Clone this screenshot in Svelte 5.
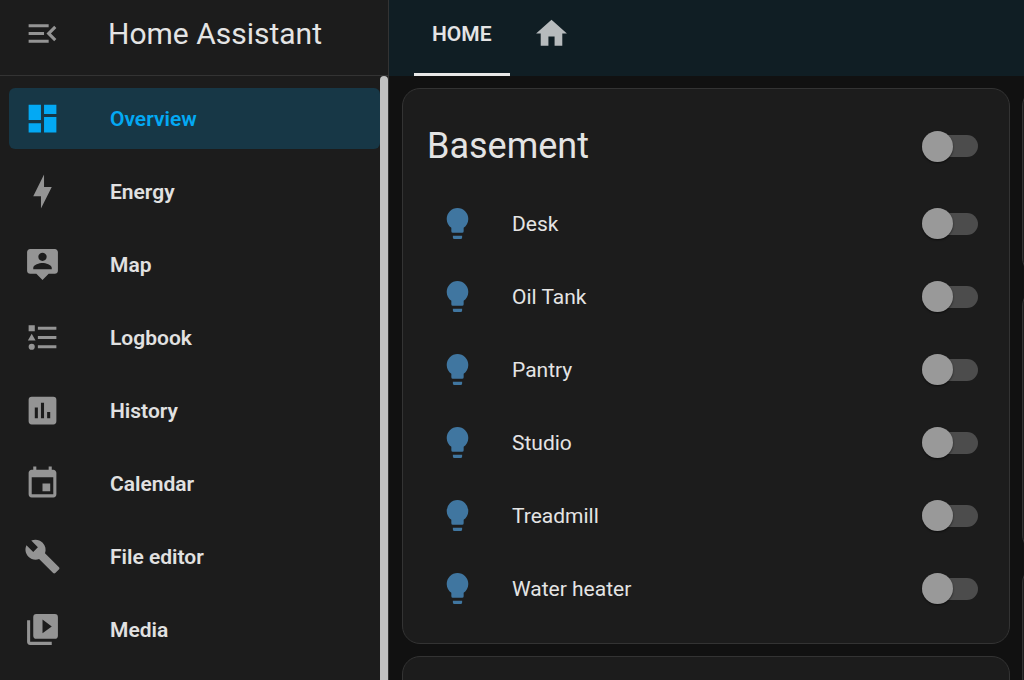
<script lang="ts">
  interface Item {
    label: string;
    icon: string;
  }

  const menuIcon =
    'M21,15.61L19.59,17L14.58,12L19.59,7L21,8.39L17.44,12L21,15.61M3,6H16V8H3V6M3,13V11H13V13H3M3,18V16H16V18H3Z';
  const homeIcon = 'M10,20V14H14V20H19V12H22L12,3L2,12H5V20H10Z';
  const bulbIcon =
    'M12,2A7,7 0 0,0 5,9C5,11.38 6.19,13.47 8,14.74V17A1,1 0 0,0 9,18H15A1,1 0 0,0 16,17V14.74C17.81,13.47 19,11.38 19,9A7,7 0 0,0 12,2M9,21A1,1 0 0,0 10,22H14A1,1 0 0,0 15,21V20H9V21Z';

  const items: Item[] = [
    { label: 'Overview', icon: 'M13,3V9H21V3M13,21H21V11H13M3,21H11V15H3M3,13H11V3H3V13Z' },
    { label: 'Energy', icon: 'M11 15H6L13 1V9H18L11 23V15Z' },
    {
      label: 'Map',
      icon: 'M20,2H4C2.89,2 2,2.89 2,4V16C2,17.11 2.9,18 4,18H8L12,22L16,18H20C21.11,18 22,17.11 22,16V4C22,2.89 21.1,2 20,2M12,4.3C13.5,4.3 14.7,5.5 14.7,7C14.7,8.5 13.5,9.7 12,9.7C10.5,9.7 9.3,8.5 9.3,7C9.3,5.5 10.5,4.3 12,4.3M18,15H6V14.1C6,12.1 10,11 12,11C14,11 18,12.1 18,14.1V15Z'
    },
    {
      label: 'Logbook',
      icon: 'M5,9.5L7.5,14H2.5L5,9.5M3,4H7V8H3V4M5,20A2,2 0 0,0 7,18A2,2 0 0,0 5,16A2,2 0 0,0 3,18A2,2 0 0,0 5,20M9,5V7H21V5H9M9,19H21V17H9V19M9,13H21V11H9V13Z'
    },
    {
      label: 'History',
      icon: 'M9,17H7V10H9V17M13,17H11V7H13V17M17,17H15V13H17V17M19,3H5A2,2 0 0,0 3,5V19A2,2 0 0,0 5,21H19A2,2 0 0,0 21,19V5A2,2 0 0,0 19,3Z'
    },
    {
      label: 'Calendar',
      icon: 'M19,19H5V8H19M16,1V3H8V1H6V3H5C3.89,3 3,3.89 3,5V19A2,2 0 0,0 5,21H19A2,2 0 0,0 21,19V5C21,3.89 20.1,3 19,3H18V1M17,12H12V17H17V12Z'
    },
    {
      label: 'File editor',
      icon: 'M22.7,19L13.6,9.9C14.5,7.6 14,4.9 12.1,3C10.1,1 7.1,0.6 4.7,1.7L9,6L6,9L1.6,4.7C0.4,7.1 0.9,10.1 2.9,12.1C4.8,14 7.5,14.5 9.8,13.6L18.9,22.7C19.3,23.1 19.9,23.1 20.3,22.7L22.6,20.4C23.1,20 23.1,19.3 22.7,19Z'
    },
    {
      label: 'Media',
      icon: 'M4,6H2V20A2,2 0 0,0 4,22H18V20H4V6M20,2H8A2,2 0 0,0 6,4V16A2,2 0 0,0 8,18H20A2,2 0 0,0 22,16V4A2,2 0 0,0 20,2M12,14.5V5.5L18,10L12,14.5Z'
    }
  ];

  let current = $state('Overview');
  let lights = $state([
    { name: 'Desk', on: false },
    { name: 'Oil Tank', on: false },
    { name: 'Pantry', on: false },
    { name: 'Studio', on: false },
    { name: 'Treadmill', on: false },
    { name: 'Water heater', on: false }
  ]);
  let anyOn = $derived(lights.some((light) => light.on));

  function toggleAll() {
    const next = !anyOn;
    for (const light of lights) light.on = next;
  }
</script>

{#snippet icon(path: string)}
  <svg class="icon" viewBox="0 0 24 24" aria-hidden="true">
    <path d={path} fill-rule="evenodd" />
  </svg>
{/snippet}

<div class="app">
  <aside class="sidebar">
    <div class="brand">
      <button class="menu" aria-label="Sidebar toggle">{@render icon(menuIcon)}</button>
      <span class="title">Home Assistant</span>
    </div>
    <div class="scroller">
      <nav class="nav">
        {#each items as item}
          <a
            class="item"
            class:active={item.label === current}
            href="#{item.label}"
            onclick={() => (current = item.label)}
          >
            {@render icon(item.icon)}
            <span>{item.label}</span>
          </a>
        {/each}
      </nav>
      <div class="thumb"></div>
    </div>
  </aside>

  <main class="main">
    <header class="tabs">
      <button class="tab selected">HOME</button>
      <button class="tab" aria-label="Home">{@render icon(homeIcon)}</button>
    </header>

    <div class="columns">
      <div class="column">
        <section class="card">
          <div class="card-header">
            <h1 id="basement">Basement</h1>
            <input
              class="switch"
              type="checkbox"
              aria-labelledby="basement"
              checked={anyOn}
              onchange={toggleAll}
            />
          </div>
          <div class="rows">
            {#each lights as light}
              <label class="row">
                {@render icon(bulbIcon)}
                <span class="name">{light.name}</span>
                <input class="switch" type="checkbox" bind:checked={light.on} />
              </label>
            {/each}
          </div>
        </section>
        <section class="card rest"></section>
      </div>
      <div class="column">
        <section class="card short"></section>
        <section class="card medium"></section>
        <section class="card rest"></section>
      </div>
    </div>
  </main>
</div>

<style>
  :global(body) {
    margin: 0;
    background: #111;
  }

  .app {
    display: flex;
    height: 100vh;
    overflow: hidden;
    color: #e4e4e4;
    font-family: Roboto, "Liberation Sans", sans-serif;
    font-size: 21px;
    line-height: 28px;
  }

  button {
    padding: 0;
    border: 0;
    background: none;
    color: inherit;
    font: inherit;
    cursor: pointer;
  }

  .icon {
    display: block;
    flex: none;
    width: 37px;
    height: 37px;
    fill: currentColor;
  }

  .sidebar {
    display: flex;
    flex: none;
    flex-direction: column;
    box-sizing: border-box;
    width: 389px;
    border-right: 1px solid #333;
    background: #1c1c1c;
  }

  .brand {
    display: flex;
    flex: none;
    align-items: center;
    gap: 47px;
    box-sizing: border-box;
    height: 76px;
    padding: 0 24px 8px;
    border-bottom: 1px solid #333;
  }

  .menu {
    color: #949494;
  }

  .title {
    font-size: 30px;
    line-height: 36px;
  }

  .scroller {
    display: flex;
    flex: 1;
    min-height: 0;
  }

  .nav {
    display: flex;
    flex: 1;
    flex-direction: column;
    gap: 12px;
    padding: 12px 0 0 9px;
  }

  .item {
    display: flex;
    flex: none;
    align-items: center;
    gap: 49px;
    box-sizing: border-box;
    height: 61px;
    padding: 0 15px;
    border-radius: 6px;
    color: #e1e1e1;
    font-weight: 600;
    text-decoration: none;
  }

  .item .icon {
    fill: #949494;
  }

  .item.active {
    background: #173746;
    color: #03a9f4;
  }

  .item.active .icon {
    fill: #03a9f4;
  }

  .thumb {
    width: 8px;
    border-radius: 4px 4px 0 0;
    background: #c1c1c1;
  }

  .main {
    display: flex;
    flex: 1;
    flex-direction: column;
    min-width: 0;
    background: #111;
  }

  .tabs {
    display: flex;
    flex: none;
    height: 76px;
    padding-left: 25px;
    background: #101e24;
  }

  .tab {
    display: flex;
    align-items: center;
    justify-content: center;
    min-width: 84px;
    padding: 0 18px 6px;
    border-bottom: 3px solid transparent;
    font-weight: 600;
  }

  .tab .icon {
    fill: #b7bbbd;
  }

  .tab.selected {
    border-bottom-color: #e8e8e8;
  }

  .columns {
    display: flex;
    flex: 1;
    gap: 12px;
    min-height: 0;
    padding: 12px 0 0 13px;
    overflow: hidden;
  }

  .column {
    display: flex;
    flex: 0 0 calc(100% - 14px);
    flex-direction: column;
    gap: 12px;
  }

  .card {
    flex: none;
    box-sizing: border-box;
    padding: 24px 31px 24px 24px;
    border: 1px solid #333;
    border-radius: 18px;
    background: #1c1c1c;
  }

  .short {
    height: 188px;
  }

  .medium {
    height: 265px;
  }

  .rest {
    height: 240px;
  }

  .card-header {
    display: flex;
    align-items: center;
    justify-content: space-between;
    height: 66px;
    margin-bottom: 14px;
  }

  h1 {
    margin: 0;
    font-size: 36px;
    font-weight: 400;
    line-height: 44px;
  }

  .rows {
    display: flex;
    flex-direction: column;
    gap: 12px;
  }

  .row {
    display: flex;
    align-items: center;
    height: 61px;
    padding-left: 12px;
    cursor: pointer;
  }

  .row .icon {
    fill: #4076a0;
  }

  .name {
    flex: 1;
    padding-left: 36px;
  }

  .switch {
    display: flex;
    flex: none;
    align-items: center;
    width: 56px;
    height: 22px;
    margin: 0;
    border-radius: 11px;
    appearance: none;
    background: #4c4c4c;
    cursor: pointer;
  }

  .switch::before {
    content: "";
    flex: none;
    width: 31px;
    height: 31px;
    border-radius: 50%;
    background: #999;
    box-shadow: 0 1px 2px rgba(0, 0, 0, 0.6);
  }

  .switch:checked {
    justify-content: flex-end;
    background: #0b5474;
  }

  .switch:checked::before {
    background: #03a9f4;
  }
</style>
